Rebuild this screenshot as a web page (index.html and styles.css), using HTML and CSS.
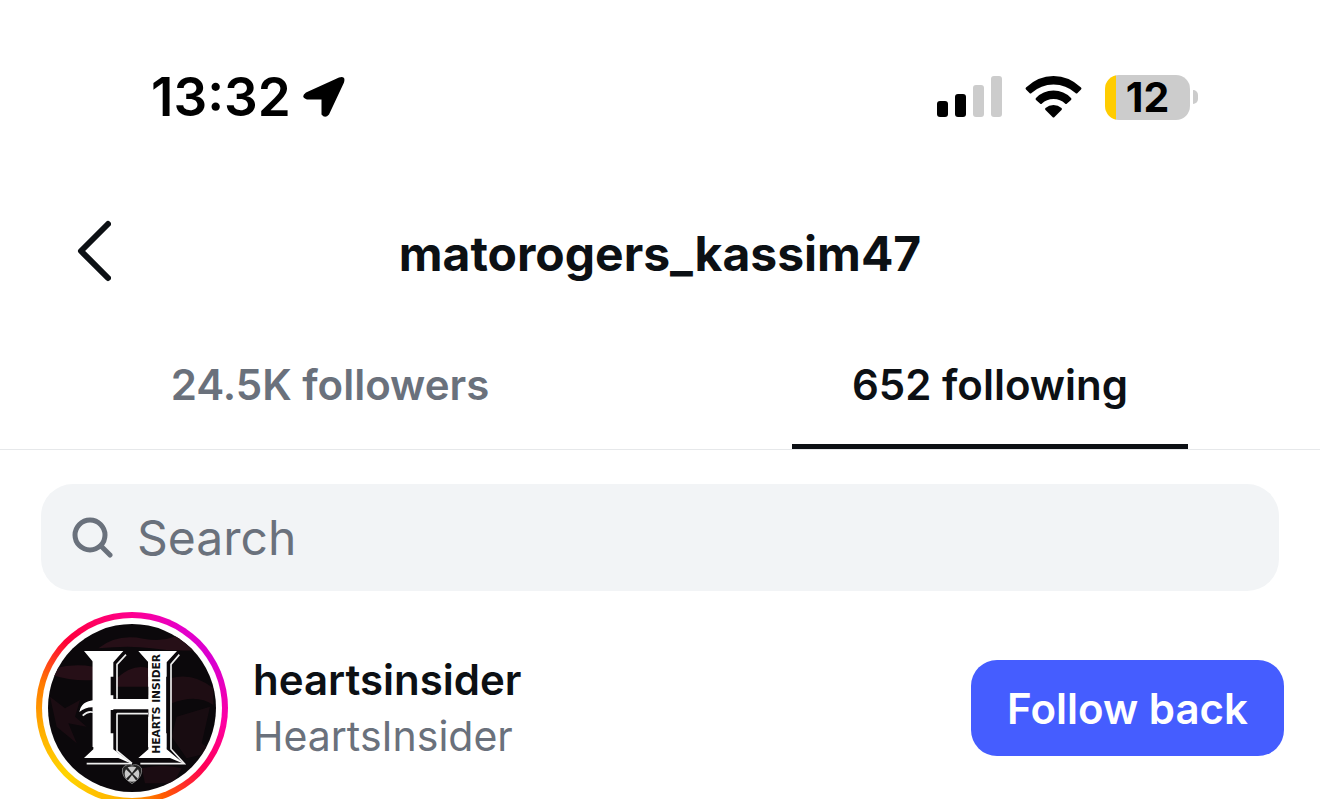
FILE: index.html
```html
<!DOCTYPE html>
<html lang="en">
<head>
  <meta charset="UTF-8" />
  <meta name="viewport" content="width=device-width, initial-scale=1.0"/>
  <title>matorogers_kassim47</title>
  <link rel="stylesheet" href="styles.css">
</head>
<body>

<div class="status-bar">
  <div class="status-left">
    <span class="time">13:32</span>
    <svg class="location-icon" viewBox="0 0 42 42" aria-hidden="true">
      <path d="M3 16.500 36 1.500Q43 -.5 41 6.500L26 38.500Q22 43 18.500 38.500V23.500H4Q-3 21 3 16.500Z"/>
    </svg>
  </div>
  <div class="status-right">
    <svg class="signal-icon" viewBox="0 0 66 42" aria-hidden="true">
      <rect x="0" y="25" width="11" height="16" rx="3"/>
      <rect x="18" y="18" width="11" height="23" rx="3"/>
      <rect class="off" x="36" y="9" width="11" height="32" rx="3"/>
      <rect class="off" x="54" y="0" width="11" height="41" rx="3"/>
    </svg>
    <svg class="wifi-icon" viewBox="0 0 58 43" aria-hidden="true">
      <path d="M1 11.500Q13 0 28.500 0T56 11.500Q57 12.500 56 13.500L52.500 17Q51.500 18 50.500 17 41 8.500 28.500 8.500T6.500 17Q5.500 18 4.500 17L1 13.500Q0 12.500 1 11.500Z"/>
      <path d="M11 22Q18 14.500 28.500 14.500T46 22Q47 23 46 24L42 27.500Q41 28.500 40 27.500 35.500 23 28.500 23T17 27.500Q16 28.500 15 27.500L11 24Q10 23 11 22Z"/>
      <path d="M20.500 32Q24 29 28.500 29T36.500 32Q37.500 33 36.500 34L29.500 41Q28.500 42 27.500 41L20.500 34Q19.500 33 20.500 32Z"/>
    </svg>
    <div class="battery">
      <span class="battery-body">12</span>
      <span class="battery-tip"></span>
    </div>
  </div>
</div>

<header class="nav">
  <button class="back" aria-label="Back">
    <svg viewBox="0 0 34 62" aria-hidden="true"><path d="M31 4 4 31 31 58"/></svg>
  </button>
  <h1>matorogers_kassim47</h1>
</header>

<nav class="tabs">
  <a class="tab" href="#followers"><span>24.5K followers</span></a>
  <a class="tab active" href="#following"><span>652 following</span></a>
</nav>

<main>
  <label class="search">
    <svg viewBox="0 0 42 42" aria-hidden="true"><circle cx="19" cy="18" r="15"/><path d="M30 29 39 38"/></svg>
    <input type="search" placeholder="Search" aria-label="Search">
  </label>

  <div class="user">
    <svg class="avatar" viewBox="18 36 576 576" role="img" aria-label="heartsinsider story">
      <defs>
        <clipPath id="photo"><circle cx="306" cy="324" r="252"/></clipPath>
      </defs>
      <foreignObject x="18" y="36" width="576" height="576"><div class="story-ring"></div></foreignObject>
      <circle cx="306" cy="324" r="270" fill="#fff"/>
      <g clip-path="url(#photo)">
        <rect x="54" y="72" width="504" height="504" fill="#0b080b"/>
        <g fill="#260f17">
          <path d="M205 145Q260 100 340 116T470 88L510 150Q430 155 365 145T205 145Z"/>
          <path d="M260 235Q310 190 355 205V265Q300 260 255 298Z"/>
          <path d="M75 205Q130 190 190 200V240Q130 245 65 225Z"/>
          <path d="M420 235Q490 215 550 265V315Q500 280 425 310Z" opacity=".7"/>
          <path d="M440 350 540 320 515 430 550 455 470 475 425 410Z" opacity=".5"/>
          <path d="M60 290 105 325 150 300 135 350 170 380 115 370 140 430 80 380Z" opacity=".6"/>
          <path d="M335 505Q400 490 455 505L430 550H345Z" opacity=".6"/>
        </g>
        <!-- monogram -->
        <text class="monogram" x="163" y="442">H</text>
        <path d="M250 260H355V297H250ZM250 328H355V350H250Z" fill="#0b080b"/>
        <g fill="#fff">
          <path d="M162 153H280L250 187V230H190V187Z"/>
          <path d="M325 153H441L410 187V230H355V187Z"/>
          <path d="M190 400H250V448L284 474 306 492 265 474H162L190 448Z"/>
          <path d="M355 400H410V448L441 474 463 492 420 474H325L355 448Z"/>
          <path d="M148 336Q153 303 194 300V322Q168 319 148 336Z"/>
        </g>
        <!-- offset shadow lines -->
        <g fill="none" stroke="#eee" stroke-width="5">
          <path d="M288 164 261 193V296M261 340V453L306 490M261 341H354M448 164 423 193V447L463 491H331M170 491H306"/>
          <path d="M158 347Q174 331 190 337"/>
        </g>
        <text class="side-text" transform="translate(389 461) rotate(-90)">HEARTS INSIDER</text>
        <path d="M278 504Q291 489 306 496 321 489 334 504 341 530 306 551 271 530 278 504Z" fill="#222" stroke="#777" stroke-width="3"/>
        <g fill="#c8c8c8">
          <path d="M306 519 293 502Q306 497 319 502ZM306 525 293 542Q306 548 319 542ZM303 522 288 508Q280 522 288 536ZM309 522 324 508Q332 522 324 536Z"/>
        </g>
      </g>
    </svg>
    <div class="names">
      <a class="username" href="#heartsinsider">heartsinsider</a>
      <span class="fullname">HeartsInsider</span>
    </div>
    <button class="follow">Follow back</button>
  </div>
</main>

</body>
</html>
```
FILE: styles.css
```css
* {
  box-sizing: border-box;
}

body {
  font-family: Inter, "Liberation Sans", sans-serif;
  margin: 0;
  height: 100vh;
  overflow: hidden;
  background: #fff;
  color: #0c1014;
}

a {
  color: inherit;
  text-decoration: none;
}

button {
  font-family: inherit;
  border: none;
  cursor: pointer;
}

svg {
  display: block;
  flex-shrink: 0;
}

/* Status bar */
.status-bar {
  display: flex;
  justify-content: space-between;
  align-items: center;
  padding: 64px 122px 0 151px;
  height: 130px;
  color: #000;
}

.status-left,
.status-right,
.battery {
  display: flex;
  align-items: center;
}

.status-left {
  gap: 12px;
}

.status-right {
  gap: 22px;
}

.time {
  font-size: 53px;
  font-weight: 600;
}

.location-icon {
  width: 42px;
  height: 42px;
}

.signal-icon {
  width: 66px;
  height: 42px;
}

.signal-icon .off {
  fill: #ccc;
}

.wifi-icon {
  width: 58px;
  height: 43px;
}

.battery {
  gap: 3px;
}

.battery-body {
  width: 85px;
  height: 45px;
  border-radius: 14px;
  background: linear-gradient(to right, #ffcc00 11px, #ccc 11px);
  font-size: 41px;
  font-weight: 700;
  line-height: 45px;
  text-align: center;
}

.battery-tip {
  width: 5px;
  height: 14px;
  border-radius: 0 7px 7px 0;
  background: #ccc;
}

/* Header */
.nav {
  display: grid;
  grid-template-columns: 120px 1fr 120px;
  align-items: center;
  height: 190px;
  padding-top: 52px;
}

.back {
  padding: 0 0 0 77px;
  background: none;
}

.back svg {
  width: 34px;
  height: 62px;
}

.back path {
  fill: none;
  stroke: #0c1014;
  stroke-width: 6;
  stroke-linecap: round;
  stroke-linejoin: round;
}

h1 {
  margin: 0;
  padding-top: 4px;
  font-size: 48px;
  font-weight: 700;
  text-align: center;
}

.tabs {
  display: flex;
  height: 130px;
  border-bottom: 1px solid #e6e8ea;
}

.tab {
  display: flex;
  flex: 1;
  justify-content: center;
  color: #6a717c;
  font-size: 42px;
  font-weight: 600;
}

.tab span {
  display: flex;
  justify-content: center;
  width: 60%;
  line-height: 130px;
  white-space: nowrap;
}

.tab.active {
  color: #0c1014;
}

.tab.active span {
  border-bottom: 5px solid #0c1014;
}

/* Search */
.search {
  display: flex;
  align-items: center;
  gap: 24px;
  height: 107px;
  margin: 34px 41px 21px;
  padding: 0 30px;
  border-radius: 32px;
  background: #f2f4f6;
}

.search svg {
  width: 42px;
  height: 42px;
  fill: none;
  stroke: #6a717c;
  stroke-width: 5;
  stroke-linecap: round;
}

.search input {
  flex: 1;
  min-width: 0;
  padding: 0;
  border: none;
  outline: none;
  background: none;
  font-family: inherit;
  font-size: 48px;
  color: #0c1014;
}

.search input::placeholder {
  color: #6a717c;
}

/* User row */
.user {
  display: flex;
  align-items: center;
  padding: 0 36px;
}

.avatar {
  width: 192px;
  height: 192px;
}

.story-ring {
  width: 100%;
  height: 100%;
  border-radius: 50%;
  background: conic-gradient(#ff0090, #e600c8 30deg, #d800d0 60deg, #ff00a0 100deg, #ff0055 130deg, #ff5a00 160deg, #ffb000 185deg, #ffd400 225deg, #ffb000 255deg, #ff7a00 285deg, #ff0038 315deg, #ff0090);
}

.monogram {
  fill: #fff;
  font-family: "Liberation Sans", sans-serif;
  font-size: 375px;
  font-weight: 700;
}

.side-text {
  fill: #111;
  font-family: "DejaVu Sans", sans-serif;
  font-size: 32px;
  font-weight: 700;
}

.names {
  display: flex;
  flex: 1;
  flex-direction: column;
  gap: 6px;
  margin-left: 25px;
  font-size: 42px;
  line-height: 51px;
}

.username {
  font-weight: 600;
}

.fullname {
  color: #6a717c;
  font-size: 41px;
}

.follow {
  width: 313px;
  height: 96px;
  border-radius: 26px;
  background: #455dff;
  color: #fff;
  font-size: 42px;
  font-weight: 600;
}
```
